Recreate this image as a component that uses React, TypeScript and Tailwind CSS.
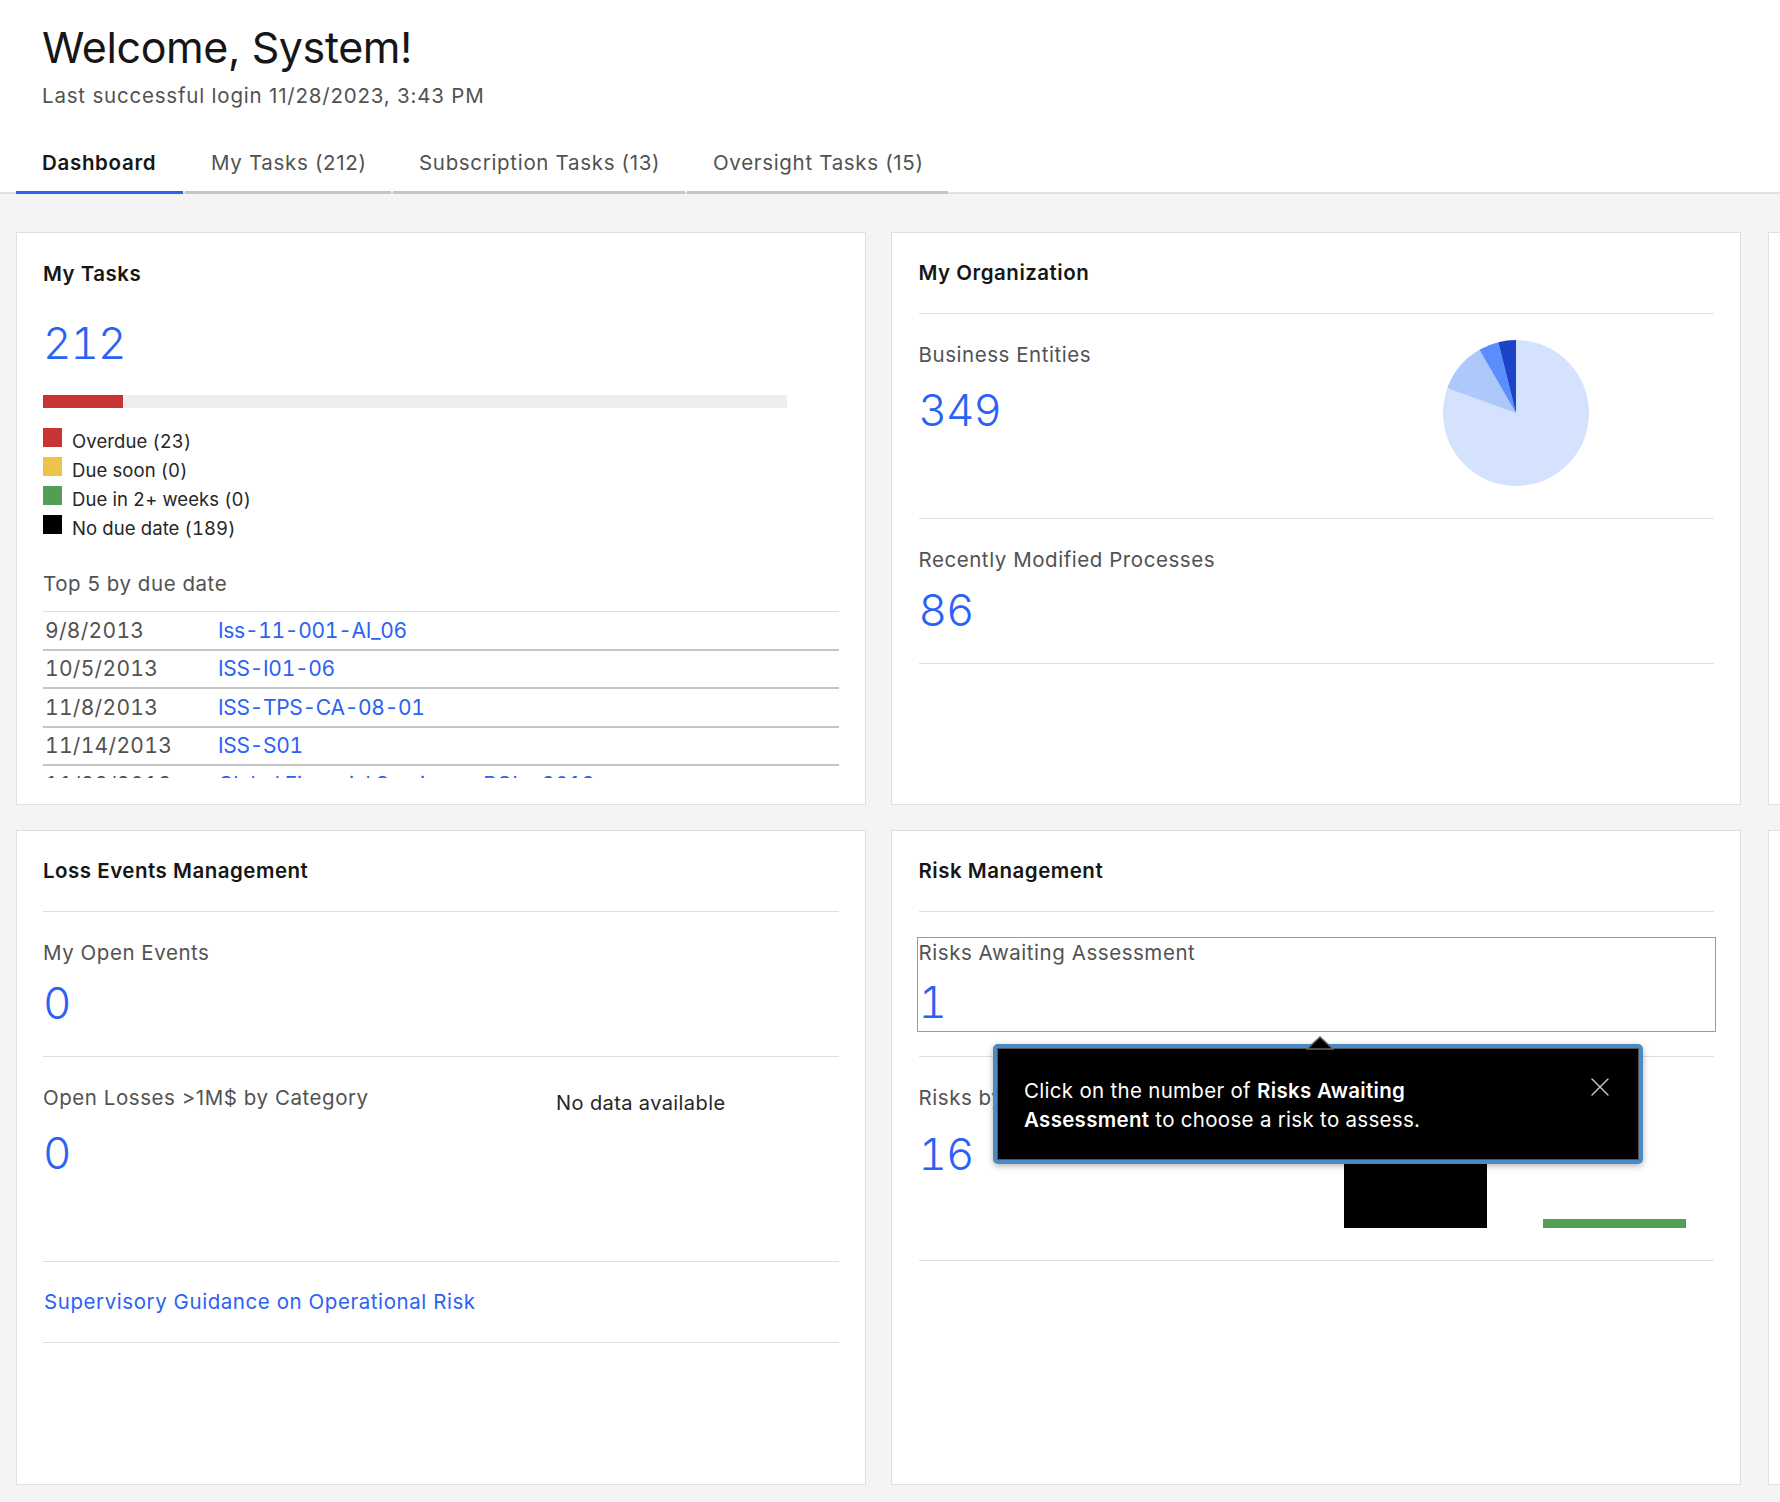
import { X } from "lucide-react";

const tasks = [
  ["9/8/2013", "Iss-11-001-AI_06"],
  ["10/5/2013", "ISS-I01-06"],
  ["11/8/2013", "ISS-TPS-CA-08-01"],
  ["11/14/2013", "ISS-S01"],
  ["11/22/2013", "Global Financial Services - ROI - 2013"],
];

const legend = [
  ["bg-[#c83333]", "Overdue (23)"],
  ["bg-[#ecc44a]", "Due soon (0)"],
  ["bg-[#519e54]", "Due in 2+ weeks (0)"],
  ["bg-black", "No due date (189)"],
];

function Label({ children }: { children: React.ReactNode }) {
  return <div className="text-[20.5px] leading-[24px] tracking-[0.55px] text-[#525252]">{children}</div>;
}

function Num({ children }: { children: React.ReactNode }) {
  return <div className="text-[44px] leading-[50px] font-light tracking-[-1px] tabular-nums text-[#2a62f5]">{children}</div>;
}

function Title({ children, line = true }: { children: React.ReactNode; line?: boolean }) {
  return (
    <div className={`flex h-[81px] items-center pt-[1px] text-[20.5px] font-semibold tracking-[0.5px] text-[#161616] ${line ? "border-b border-[#e0e0e0]" : ""}`}>
      {children}
    </div>
  );
}

function Pie() {
  // slices run clockwise from twelve o'clock: 290, 40, 16, 14 degrees
  return (
    <svg width="146" height="146" viewBox="-73 -73 146 146">
      <circle r="73" fill="#d4e2fd" />
      <path d="M0 0 L-68.6 -25 A73 73 0 0 1 -36.5 -63.2 Z" fill="#adc8fb" />
      <path d="M0 0 L-36.5 -63.2 A73 73 0 0 1 -17.7 -70.8 Z" fill="#5a8dfd" />
      <path d="M0 0 L-17.7 -70.8 A73 73 0 0 1 0 -73 Z" fill="#1c44c8" />
    </svg>
  );
}

export default function App() {
  return (
    <div className="h-[1502px] overflow-hidden bg-[#f4f4f4] font-[Inter,sans-serif]">
      <header className="h-[194px] border-b-2 border-[#e0e0e0] bg-white pl-[16px]">
        <div className="pl-[26px] pt-[19px]">
          <h1 className="text-[43px] leading-[56px] tracking-[-0.4px] text-[#161616]">Welcome, System!</h1>
          <p className="mt-[7px] text-[20.5px] leading-[28px] tracking-[0.8px] text-[#525252]">Last successful login 11/28/2023, 3:43 PM</p>
        </div>
        <nav className="mt-[37px] flex gap-[2px] text-[20.5px] tracking-[0.68px]">
          <div className="flex h-[47px] w-[167px] items-center border-b-[3px] border-[#2a62f5] pb-[11px] pl-[26px] font-semibold text-[#161616]">Dashboard</div>
          <div className="flex h-[47px] w-[206px] items-center border-b-[3px] border-[#c6c6c6] pb-[11px] pl-[26px] text-[#525252]">My Tasks (212)</div>
          <div className="flex h-[47px] w-[292px] items-center border-b-[3px] border-[#c6c6c6] pb-[11px] pl-[26px] text-[#525252]">Subscription Tasks (13)</div>
          <div className="flex h-[47px] w-[261px] items-center border-b-[3px] border-[#c6c6c6] pb-[11px] pl-[26px] text-[#525252]">Oversight Tasks (15)</div>
        </nav>
      </header>

      <main className="grid grid-cols-[850px_850px_850px] grid-rows-[573px_655px] gap-x-[25px] gap-y-[25px] pl-[16px] pt-[38px]">
        {/* My Tasks */}
        <section className="border border-[#e0e0e0] bg-white px-[26px]">
          <Title line={false}>My Tasks</Title>
          <div className="mt-[4px]"><Num>212</Num></div>
          <div className="mt-[27px] h-[13px] w-[744px] bg-[#eeeeee]">
            <div className="h-full w-[80px] bg-[#c83333]" />
          </div>
          <ul className="mt-[20px] flex flex-col gap-[10px]">
            {legend.map(([color, text]) => (
              <li key={text} className="flex h-[19px] gap-[10px] text-[18.5px] leading-[24px] tracking-[0.1px] tabular-nums text-[#262626]">
                <span className={`h-[19px] w-[19px] ${color}`} />
                <span className="translate-y-[1px]">{text}</span>
              </li>
            ))}
          </ul>
          <div className="mt-[38px]">
            <Label>Top 5 by due date</Label>
          </div>
          <div className="mt-[15px] h-[167px] overflow-hidden border-t border-[#e0e0e0]">
            {tasks.map(([date, name]) => (
              <div key={name} className="flex h-[38.6px] items-center border-b-2 border-[#c6c6c6] pl-[2px] text-[21px] tabular-nums">
                <span className="w-[173px] tracking-[0.3px] text-[#525252]">{date}</span>
                <a className="tracking-[-0.3px] text-[#2a62f5]">{name}</a>
              </div>
            ))}
          </div>
        </section>

        {/* My Organization */}
        <section className="border border-[#e0e0e0] bg-white pl-[26.5px] pr-[26px]">
          <Title>My Organization</Title>
          <div className="flex h-[205px] justify-between border-b border-[#e0e0e0] pr-[125px] pt-[29px]">
            <div>
              <Label>Business Entities</Label>
              <div className="mt-[18px]"><Num>349</Num></div>
            </div>
            <div className="-mt-[3px]"><Pie /></div>
          </div>
          <div className="h-[145px] border-b border-[#e0e0e0] pt-[29px]">
            <Label>Recently Modified Processes</Label>
            <div className="mt-[13px]"><Num>86</Num></div>
          </div>
        </section>

        <section className="ml-[2px] border border-[#e0e0e0] bg-white" />

        {/* Loss Events Management */}
        <section className="border border-[#e0e0e0] bg-white px-[26px]">
          <Title>Loss Events Management</Title>
          <div className="h-[145px] border-b border-[#e0e0e0] pt-[29px]">
            <Label>My Open Events</Label>
            <div className="mt-[13px]"><Num>0</Num></div>
          </div>
          <div className="flex h-[205px] border-b border-[#e0e0e0] pt-[29px]">
            <div className="w-[513px]">
              <Label>Open Losses &gt;1M$ by Category</Label>
              <div className="mt-[18px]"><Num>0</Num></div>
            </div>
            <div className="mt-[5px] text-[20px] leading-[24px] tracking-[0.4px] text-[#262626]">No data available</div>
          </div>
          <div className="flex h-[81px] items-center border-b border-[#e0e0e0] pl-[1px] text-[20.5px] tracking-[0.57px] text-[#2a62f5]">
            Supervisory Guidance on Operational Risk
          </div>
        </section>

        {/* Risk Management */}
        <section className="relative border border-[#e0e0e0] bg-white pl-[26.5px] pr-[26px]">
          <Title>Risk Management</Title>
          <div className="h-[145px] border-b border-[#e0e0e0] pt-[25px]">
            <div className="-mx-[2px] h-[95px] border border-[#6ea3e8] pl-[1px] pt-[3px]">
              <Label>Risks Awaiting Assessment</Label>
              <div className="mt-[12px]"><Num>1</Num></div>
            </div>
          </div>
          <div className="flex h-[204px] justify-between border-b border-[#e0e0e0] pr-[27px] pt-[29px]">
            <div>
              <Label>Risks by Status</Label>
              <div className="mt-[19px]"><Num>16</Num></div>
            </div>
            <svg width="343" height="142" viewBox="0 0 343 142">
              <rect x="0" y="0" width="143" height="142" fill="#000" />
              <rect x="199" y="133" width="143" height="9" fill="#519e54" />
            </svg>
          </div>

          {/* coach mark over the section */}
          <div className="absolute left-[101px] top-[213px] h-[120px] w-[650px] rounded-[5px] border-[4px] border-[#4a8ac6] bg-black shadow-[0_2px_6px_rgba(0,0,0,0.3),inset_0_0_0_1px_#555]">
            <svg width="28" height="14" viewBox="0 0 28 14" className="absolute left-[309px] top-[-12px]">
              <path d="M1 13 L14 1 L27 13 Z" fill="#000" stroke="#666" strokeWidth="1.5" />
            </svg>
            <p className="pl-[27px] pt-[28px] text-[20.5px] leading-[29px] tracking-[0.3px] text-white">
              Click on the number of <b className="font-semibold">Risks Awaiting</b>
              <br />
              <b className="font-semibold">Assessment</b> to choose a risk to assess.
            </p>
            <X className="absolute right-[23px] top-[23px] text-[#c6c6c6]" size={32} strokeWidth={1} />
          </div>
        </section>

        <section className="ml-[2px] border border-[#e0e0e0] bg-white" />
      </main>
    </div>
  );
}
